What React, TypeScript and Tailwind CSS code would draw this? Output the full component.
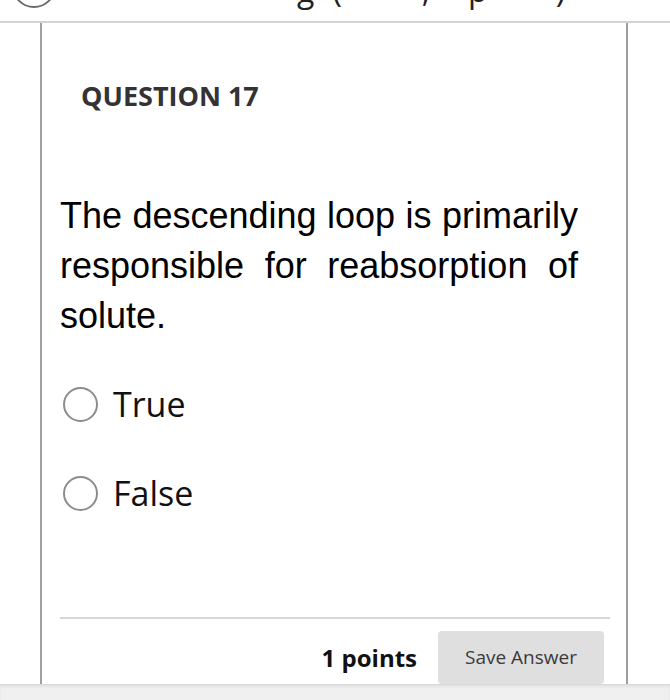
import React from 'react';

// previous question's cut-off tail, only the descenders show
function TopStrip() {
  return (
    <div className="h-[23px] overflow-hidden flex items-end border-b-2 border-[#d4d4d4]">
      <div className="ml-[12px] mb-[13px] w-[44px] h-[44px] shrink-0 rounded-full border-2 border-[#6b6b6b]" />
      <div className="flex items-end text-[32px] leading-none text-[#222] mb-[15px]" style={{ fontFamily: '"Open Sans", sans-serif' }}>
        <span className="ml-[241px]">g</span>
        <span className="ml-[18px]">(</span>
        <span className="ml-[80px]">,</span>
        <span className="ml-[38px]">p</span>
        <span className="ml-[68px]">)</span>
      </div>
    </div>
  );
}

function Option({ label }: { label: string }) {
  return (
    <div className="flex items-center h-[40px] ml-[21px]">
      <div className="w-[35px] h-[35px] rounded-full border-2 border-[#8c8c8c] bg-white" />
      <span className="ml-[15px] text-[34px] leading-[40px] text-[#111]">{label}</span>
    </div>
  );
}

export default function App() {
  return (
    <div className="w-[670px] h-[700px] bg-white overflow-hidden flex flex-col" style={{ fontFamily: '"Open Sans", sans-serif' }}>
      <TopStrip />

      <div className="ml-[40px] w-[588px] h-[661px] border-x-2 border-[#a0a0a0] flex flex-col">
        <h2 className="mt-[59px] ml-[39px] text-[27px] leading-none font-bold text-[#333]">QUESTION 17</h2>

        <p
          className="mt-[82px] ml-[18px] w-[518px] text-[36px] leading-[50px] text-black text-justify"
          style={{ fontFamily: '"Liberation Sans", Arial, sans-serif' }}
        >
          The descending loop is primarily responsible for reabsorption of solute.
        </p>

        <div className="mt-[43px] flex flex-col gap-[49px]">
          <Option label="True" />
          <Option label="False" />
        </div>

        <div className="mt-[104px] ml-[18px] mr-[16px] h-[2px] bg-[#d6d6d6]" />

        <div className="mt-[12px] flex items-center justify-end pr-[22px]">
          <span className="text-[24px] font-bold text-[#111] mr-[21px]">1 points</span>
          <button className="w-[166px] h-[53px] rounded-[4px] bg-[#dfdfdf] text-[19px] text-[#3a3a3a]">
            Save Answer
          </button>
        </div>
      </div>

      <div className="flex-1 bg-[#f0f0f0] border-t border-[#d8d8d8] shadow-[inset_0_2px_3px_rgba(0,0,0,0.06)]" />
    </div>
  );
}
